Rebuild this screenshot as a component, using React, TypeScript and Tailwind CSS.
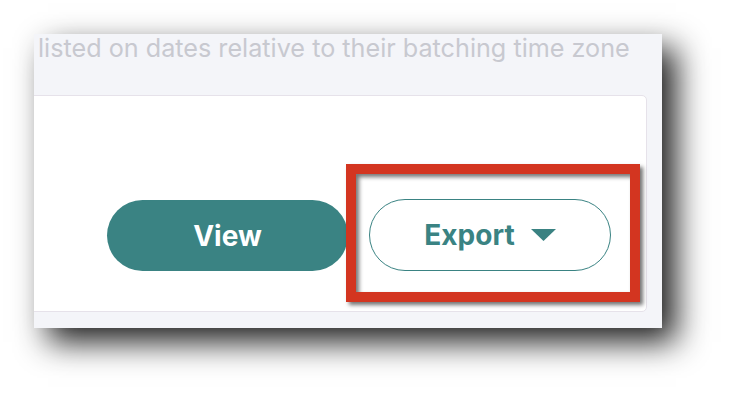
const font = { fontFamily: "Inter, 'Noto Sans', sans-serif" };

const Caret = () => (
  <svg width="25" height="12" viewBox="0 0 25 12" className="shrink-0">
    <path d="M0 0 H25 L12.5 12 Z" fill="#3a8282" />
  </svg>
);

export default function App() {
  return (
    <div className="h-[402px] w-[736px] overflow-hidden bg-white pl-[34px] pt-[34px]" style={font}>
      <div className="flex h-[294px] w-[628px] flex-col overflow-hidden bg-[#f4f5f9] shadow-[14px_14px_30px_rgba(0,0,0,0.88)]">
        <p className="h-[61px] whitespace-nowrap pl-[4px] text-[25.2px] leading-[29px] text-[#c8c9d0]">
          listed on dates relative to their batching time zone
        </p>

        <div className="relative -ml-[20px] mr-[15px] mb-[16px] flex flex-1 items-end justify-end gap-[21px] rounded-[5px] border border-[#e6e2ea] bg-white pr-[35px] pb-[40px]">
          <button className="flex h-[71px] w-[241px] items-center justify-center rounded-full bg-[#3a8383] text-[28px] font-bold text-white">
            View
          </button>

          <div className="relative">
            <button className="flex h-[72px] w-[242px] items-center justify-center gap-[16px] rounded-full border border-[#3a8383] bg-white text-[28px] font-bold text-[#3a8383]">
              Export
              <Caret />
            </button>

            {/* annotation */}
            <div className="pointer-events-none absolute -top-[35px] -left-[23px] -right-[29px] -bottom-[31px] border-[10px] border-[#d33520] shadow-[3px_3px_4px_rgba(0,0,0,0.55),inset_3px_3px_4px_rgba(0,0,0,0.55)]" />
          </div>
        </div>
      </div>
    </div>
  );
}
